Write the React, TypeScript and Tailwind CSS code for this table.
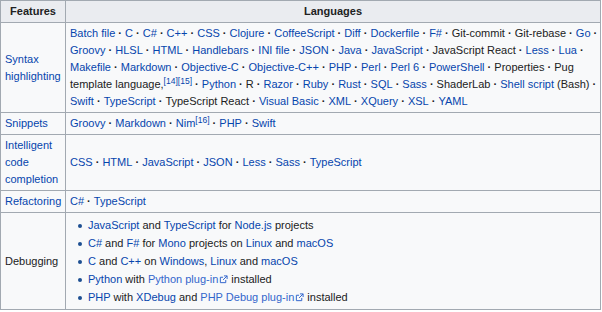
import React from "react";

const LINK = "text-[#0645ad]";
const EXT = "text-[#3366cc]";

type Item = { t: React.ReactNode; link?: boolean; sup?: string[]; tail?: string; br?: boolean };

function Sep() {
  return <span className="font-bold"> · </span>;
}

function HList({ items }: { items: Item[] }) {
  return (
    <>
      {items.map((it, i) => (
        <React.Fragment key={i}>
          <span className={it.link === false ? "" : LINK}>{it.t}</span>
          {it.tail && <span>{it.tail}</span>}
          {it.sup &&
            it.sup.map((s) => (
              <sup key={s} className={`${LINK} text-[8.5px]`}>
                [{s}]
              </sup>
            ))}
          {i < items.length - 1 && <Sep />}
          {it.br && <br />}
        </React.Fragment>
      ))}
    </>
  );
}

function ExtIcon() {
  return (
    <svg width="9" height="9" viewBox="0 0 10 10" className="inline-block align-baseline ml-[1px] -mb-[1px]">
      <path d="M1.5 2.5h3M1.5 2.5v6h6v-3" fill="none" stroke="#3366cc" strokeWidth="1.1" />
      <path d="M5.5 1h3.5v3.5M9 1L4.5 5.5" fill="none" stroke="#3366cc" strokeWidth="1.1" />
    </svg>
  );
}

const syntax: Item[] = [
  { t: "Batch file" }, { t: "C" }, { t: "C#" }, { t: "C++" }, { t: "CSS" }, { t: "Clojure" },
  { t: "CoffeeScript" }, { t: "Diff" }, { t: "Dockerfile" }, { t: "F#" },
  { t: "Git-commit", link: false }, { t: "Git-rebase", link: false }, { t: "Go", br: true },
  { t: "Groovy" }, { t: "HLSL" }, { t: "HTML" }, { t: "Handlebars" }, { t: "INI file" },
  { t: "JSON" }, { t: "Java" }, { t: "JavaScript" }, { t: "JavaScript React", link: false },
  { t: "Less" }, { t: "Lua", br: true }, { t: "Makefile" }, { t: "Markdown" }, { t: "Objective-C" },
  { t: "Objective-C++" }, { t: "PHP" }, { t: "Perl" }, { t: "Perl 6" }, { t: "PowerShell" },
  { t: "Properties", link: false },
  {
    t: (
      <>
        Pug
        <br />
        template language,
      </>
    ),
    link: false,
    sup: ["14", "15"],
  },
  { t: "Python" }, { t: "R", link: false }, { t: "Razor" }, { t: "Ruby" }, { t: "Rust" },
  { t: "SQL" }, { t: "Sass" }, { t: "ShaderLab", link: false },
  { t: "Shell script", tail: " (Bash)", br: true }, { t: "Swift" }, { t: "TypeScript" },
  { t: "TypeScript React", link: false }, { t: "Visual Basic" }, { t: "XML" }, { t: "XQuery" },
  { t: "XSL" }, { t: "YAML" },
];

const snippets: Item[] = [
  { t: "Groovy" }, { t: "Markdown" }, { t: "Nim", sup: ["16"] }, { t: "PHP" }, { t: "Swift" },
];

const intelli: Item[] = [
  { t: "CSS" }, { t: "HTML" }, { t: "JavaScript" }, { t: "JSON" }, { t: "Less" }, { t: "Sass" },
  { t: "TypeScript" },
];

const refactor: Item[] = [{ t: "C#" }, { t: "TypeScript" }];

function L({ children }: { children: React.ReactNode }) {
  return <span className={LINK}>{children}</span>;
}

function Bullet({ children }: { children: React.ReactNode }) {
  return (
    <li className="flex items-center mb-[1px]">
      <span className="w-[4px] h-[4px] rounded-full bg-[#1d4f91] mr-[6px] shrink-0" />
      <span>{children}</span>
    </li>
  );
}

export default function App() {
  const th = "border border-[#a2a9b1] bg-[#eaecf0] font-bold text-center px-[4px] py-[2px]";
  const td = "border border-[#a2a9b1] px-[4px] py-[2px] align-middle";
  return (
    <div className="w-[602px] h-[312px] bg-white font-['Liberation_Sans',Arial,sans-serif] text-[11px] leading-[17px] text-[#202122]">
      <table className="table-fixed w-[601px] bg-[#f8f9fa] border border-[#a2a9b1]">
        <colgroup>
          <col className="w-[65px]" />
          <col />
        </colgroup>
        <thead>
          <tr>
            <th className={th}>Features</th>
            <th className={th}>Languages</th>
          </tr>
        </thead>
        <tbody>
          <tr>
            <td className={`${td} ${LINK}`}>Syntax highlighting</td>
            <td className={`${td} whitespace-nowrap`}>
              <HList items={syntax} />
            </td>
          </tr>
          <tr>
            <td className={`${td} ${LINK}`}>Snippets</td>
            <td className={td}>
              <HList items={snippets} />
            </td>
          </tr>
          <tr>
            <td className={`${td} ${LINK}`}>Intelligent code completion</td>
            <td className={td}>
              <HList items={intelli} />
            </td>
          </tr>
          <tr>
            <td className={`${td} ${LINK}`}>Refactoring</td>
            <td className={td}>
              <HList items={refactor} />
            </td>
          </tr>
          <tr>
            <td className={td}>Debugging</td>
            <td className={td}>
              <ul className="mt-[2px] ml-[8px]">
                <Bullet>
                  <L>JavaScript</L> and <L>TypeScript</L> for <L>Node.js</L> projects
                </Bullet>
                <Bullet>
                  <L>C#</L> and <L>F#</L> for <L>Mono</L> projects on <L>Linux</L> and <L>macOS</L>
                </Bullet>
                <Bullet>
                  <L>C</L> and <L>C++</L> on <L>Windows</L>, <L>Linux</L> and <L>macOS</L>
                </Bullet>
                <Bullet>
                  <L>Python</L> with <span className={EXT}>Python plug-in</span>
                  <ExtIcon /> installed
                </Bullet>
                <Bullet>
                  <L>PHP</L> with <L>XDebug</L> and <span className={EXT}>PHP Debug plug-in</span>
                  <ExtIcon /> installed
                </Bullet>
              </ul>
            </td>
          </tr>
        </tbody>
      </table>
    </div>
  );
}
